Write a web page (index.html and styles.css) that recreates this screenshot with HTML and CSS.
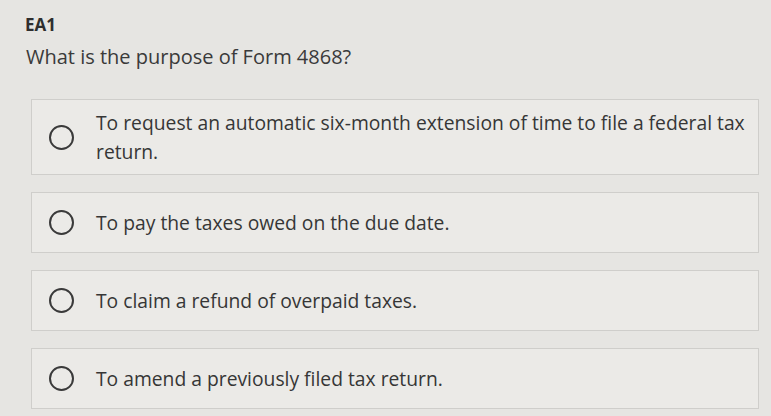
FILE: index.html
```html
<!DOCTYPE html>
<html lang="en">
<head>
<meta charset="utf-8">
<title>EA1</title>
<link rel="stylesheet" href="styles.css">
</head>
<body>
<main class="page">
  <h1 class="qid">EA1</h1>
  <p class="question">What is the purpose of Form 4868?</p>
  <div class="options">
    <label class="option">
      <span class="radio"></span>
      <span class="text">To request an automatic six-month extension of time to file a federal tax return.</span>
    </label>
    <label class="option">
      <span class="radio"></span>
      <span class="text">To pay the taxes owed on the due date.</span>
    </label>
    <label class="option">
      <span class="radio"></span>
      <span class="text">To claim a refund of overpaid taxes.</span>
    </label>
    <label class="option">
      <span class="radio"></span>
      <span class="text">To amend a previously filed tax return.</span>
    </label>
  </div>
</main>
</body>
</html>
```
FILE: styles.css
```css
html, body {
  margin: 0;
  padding: 0;
  background: #e6e5e2;
}
body {
  font-family: "Open Sans", "Noto Sans", "Liberation Sans", sans-serif;
  color: #333;
}
.page {
  padding: 13px 12px 0 25px;
  display: flex;
  flex-direction: column;
}
.qid {
  margin: 0;
  font-size: 17px;
  font-weight: 700;
  line-height: 24px;
  color: #2e2e2e;
}
.question {
  margin: 6px 0 0 1px;
  font-size: 20px;
  line-height: 28px;
  color: #3a3a3a;
}
.options {
  margin: 28px 0 0 6px;
  display: flex;
  flex-direction: column;
  gap: 17px;
}
.option {
  box-sizing: border-box;
  min-height: 61px;
  padding: 8px 1px 8px 17px;
  display: flex;
  align-items: center;
  gap: 22px;
  background: #ebeae7;
  border: 1.5px solid #cfcecb;
}
.radio {
  flex: none;
  box-sizing: border-box;
  width: 25px;
  height: 25px;
  border: 2.5px solid #3a3a3a;
  border-radius: 50%;
}
.text {
  font-size: 19.3px;
  line-height: 29px;
  color: #363636;
}
```
